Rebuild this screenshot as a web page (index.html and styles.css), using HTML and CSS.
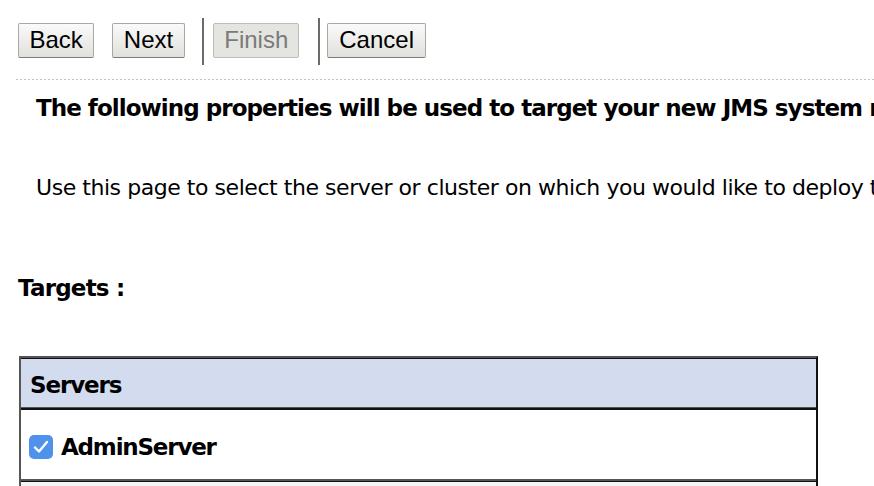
FILE: index.html
```html
<!DOCTYPE html>
<html>
<head>
<meta charset="utf-8">
<link rel="stylesheet" href="styles.css">
</head>
<body>
<div class="toolbar">
  <button class="btn btn-back">Back</button>
  <button class="btn btn-next">Next</button>
  <span class="sep"></span>
  <button class="btn btn-finish" disabled>Finish</button>
  <span class="sep sep2"></span>
  <button class="btn">Cancel</button>
</div>
<div class="rule"></div>
<div class="content">
  <p class="lead">The following properties will be used to target your new JMS system resource.</p>
  <p class="desc">Use this page to select the server or cluster on which you would like to deploy this JMS system resource.</p>
</div>
<h3 class="targets">Targets :</h3>
<table class="grid">
  <tr><th>Servers</th></tr>
  <tr><td><label class="check"><span class="box"><svg width="24" height="24" viewBox="0 0 24 24"><path d="M6 12.5 L10 16.5 L18 7" fill="none" stroke="#fff" stroke-width="2.4" stroke-linecap="round" stroke-linejoin="round"/></svg></span>AdminServer</label></td></tr>
  <tr><td class="next-row">&nbsp;</td></tr>
</table>
</body>
</html>
```
FILE: styles.css
```css
html, body { margin: 0; padding: 0; background: #fff; }
body { font-family: "DejaVu Sans", Verdana, sans-serif; color: #000; overflow: hidden; width: 874px; height: 486px; }
.toolbar { display: flex; align-items: center; padding: 18px 0 0 18px; height: 47px; }
.btn {
  font-family: "Liberation Sans", Arial, sans-serif;
  font-size: 24px;
  height: 35px;
  padding: 0 11px;
  margin: -3px 0 0 0;
  color: #000;
  background: linear-gradient(#fafafa, #e0e0dc);
  border: 1px solid #a8a8a8;
  border-bottom-color: #7c7c7c;
  border-radius: 2px;
  line-height: 32px;
}
.btn-back { padding: 0 10.5px; }
.btn-next { margin-left: 17.5px; }
.btn-finish { padding: 0 10px; }
.btn:disabled { color: #7a7a7a; background: #e4e4e0; border-color: #bdbdb8; }
.sep { width: 2px; height: 47px; background: #6a6a6a; margin: 0 9px 0 17px; align-self: flex-start; }
.sep2 { margin: 0 7px 0 19px; }
.rule { margin: 14px 0 0 16px; height: 1px; background: repeating-linear-gradient(90deg, #c4c4c4 0 2px, transparent 2px 4px); }
.content { padding-left: 36px; }
.lead { font-weight: bold; font-size: 23px; margin: 14px 0 0 0; white-space: nowrap; line-height: 28px; letter-spacing: -0.95px; }
.desc { font-size: 22px; margin: 52px 0 0 0; white-space: nowrap; line-height: 28px; letter-spacing: -0.45px; }
.targets { font-size: 23px; margin: 72px 0 0 18px; line-height: 28px; letter-spacing: -0.8px; }
.grid { margin: 54px 0 0 19px; width: 799px; border-collapse: separate; border-spacing: 0; border-style: solid; border-width: 2px; border-color: #555 #111 #111 #555; }
.grid th { text-align: left; background: #d3dcee; font-size: 23px; letter-spacing: -1.1px; height: 45px; padding: 3px 0 0 9px; border-top: 1px solid #111; border-bottom: 1px solid #555; }
.grid td { font-size: 23px; font-weight: bold; letter-spacing: -1.2px; height: 69px; padding: 0 0 0 8px; border-top: 2px solid #111; border-bottom: 2px solid #555; }
.grid td.next-row { background: #f4f4f4; border-top: 1px solid #111; }
.check { display: flex; align-items: center; gap: 8px; margin-top: 4px; }
.box { width: 24px; height: 24px; border-radius: 5px; background: #4f92ec; display: flex; align-items: center; justify-content: center; }
```
